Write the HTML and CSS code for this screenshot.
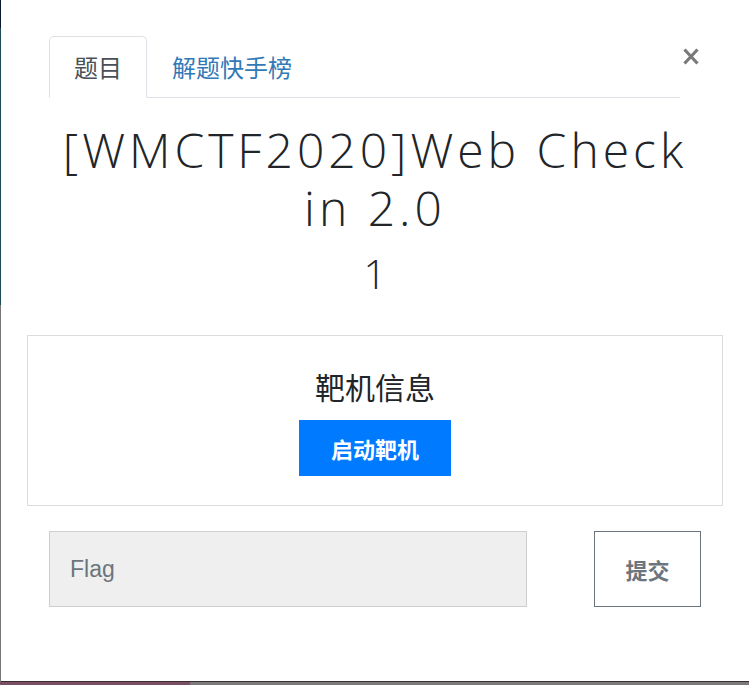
FILE: index.html
```html
<!DOCTYPE html>
<html lang="zh-CN">
<head>
<meta charset="utf-8">
<title>题目</title>
<link rel="stylesheet" href="styles.css">
</head>
<body>
<div class="backdrop">
  <div class="modal">
    <div class="modal-header">
      <ul class="nav-tabs">
        <li class="tab active">题目</li>
        <li class="tab"><a href="#">解题快手榜</a></li>
      </ul>
      <button class="close" type="button" aria-label="关闭">
        <svg width="16" height="17" viewBox="0 0 16 17"><path d="M1.5 1.5L14.5 15.5M14.5 1.5L1.5 15.5" stroke="#7a7a7a" stroke-width="3.2" stroke-linecap="butt"/></svg>
      </button>
    </div>
    <h3 class="challenge-name">[WMCTF2020]Web Check in 2.0</h3>
    <h4 class="challenge-value">1</h4>
    <div class="target-box">
      <div class="target-title">靶机信息</div>
      <button class="btn-start" type="button">启动靶机</button>
    </div>
    <form class="flag-row">
      <input class="flag-input" type="text" placeholder="Flag">
      <button class="btn-submit" type="button">提交</button>
    </form>
  </div>
</div>
</body>
</html>
```
FILE: styles.css
```css
html, body {
  margin: 0;
  padding: 0;
  height: 100%;
}

body {
  background: #7a7a7a;
  font-family: "Noto Sans CJK SC", "Noto Sans", sans-serif;
  overflow: hidden;
}

/* dimmed page behind the dialog */
.backdrop {
  height: 685px;
  background:
    linear-gradient(to right, #7b4f62 0, #7b4f62 190px, #7a7a7a 190px) bottom / 100% 3px no-repeat,
    linear-gradient(to bottom, #0a1633 0, #0a1633 28px, #1f4a58 28px, #1f4a58 305px, #777 305px) left / 1px 100% no-repeat,
    #7a7a7a;
}

.modal {
  margin-left: 1px;
  width: 748px;
  height: 682px;
  background: #fff;
  border-bottom: 1px solid #3b2b33;
  box-sizing: border-box;
}

.modal-header {
  display: flex;
  align-items: flex-start;
  padding: 36px 49px 0 48px;
}

.nav-tabs {
  flex: 1;
  display: flex;
  margin: 0;
  padding: 0;
  list-style: none;
  border-bottom: 1px solid #dee2e6;
}

.tab {
  font-size: 24px;
  line-height: 36px;
  padding: 12px 24px 12px 24px;
  border: 1px solid transparent;
  border-top-left-radius: 5px;
  border-top-right-radius: 5px;
  margin-bottom: -1px;
  color: #495057;
}

.tab.active {
  border-color: #dee2e6 #dee2e6 #fff;
  background: #fff;
}

.tab a {
  color: #3279b7;
  text-decoration: none;
}

.close {
  margin: 11px 0 0 2px;
  width: 18px;
  height: 18px;
  padding: 0;
  border: 0;
  background: none;
  display: flex;
  align-items: center;
  justify-content: center;
}

.challenge-name {
  margin: 23px 40px 0;
  text-align: center;
  font-family: "Open Sans", sans-serif;
  font-weight: 300;
  font-size: 48px;
  line-height: 1.2;
  letter-spacing: 4px;
  color: #212529;
}

.challenge-value {
  margin: 14px 0 0;
  text-align: center;
  font-family: "Open Sans", sans-serif;
  font-weight: 300;
  font-size: 40px;
  line-height: 1.2;
  color: #212529;
}

.target-box {
  margin: 37px 26px 0 26px;
  height: 171px;
  box-sizing: border-box;
  border: 1px solid #dcdcdc;
  display: flex;
  flex-direction: column;
  align-items: center;
  padding-top: 32px;
}

.target-title {
  font-size: 30px;
  line-height: 36px;
  color: #212529;
}

.btn-start {
  margin-top: 16px;
  width: 152px;
  height: 56px;
  border: 0;
  background: #007bff;
  color: #fff;
  font-family: "Noto Sans CJK SC", sans-serif;
  font-weight: 700;
  font-size: 22px;
}

.flag-row {
  display: flex;
  justify-content: space-between;
  margin: 25px 0 0;
  padding: 0 48px 0 48px;
}

.flag-input {
  width: 478px;
  height: 76px;
  box-sizing: border-box;
  border: 1px solid #cfcfd2;
  background: #efefef;
  padding: 0 20px;
  font-family: "Liberation Sans", Arial, sans-serif;
  font-size: 23px;
  color: #495057;
  outline: none;
}

.flag-input::placeholder {
  color: #6c757d;
}

.btn-submit {
  width: 107px;
  height: 76px;
  box-sizing: border-box;
  border: 1px solid #6c757d;
  background: #fff;
  color: #6c757d;
  font-family: "Noto Sans CJK SC", sans-serif;
  font-weight: 700;
  font-size: 22px;
}
```
